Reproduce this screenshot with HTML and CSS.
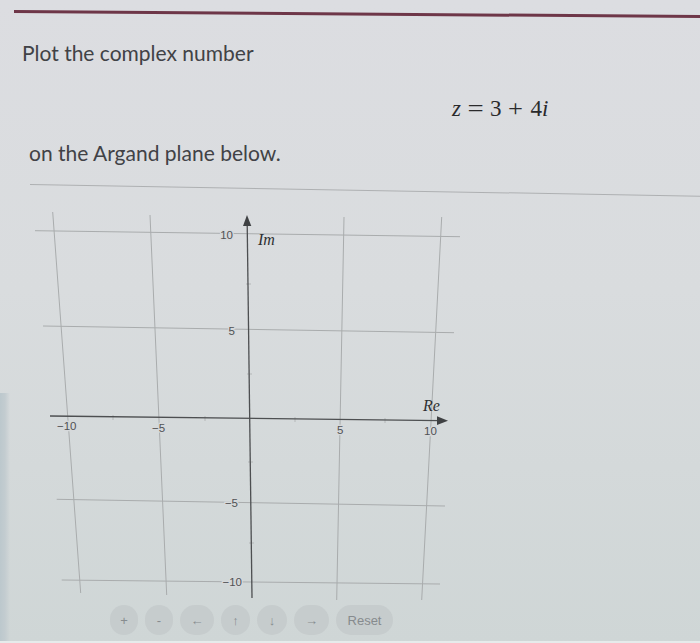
FILE: index.html
```html
<!DOCTYPE html>
<html lang="en">
<head>
<meta charset="utf-8">
<title>Argand plane</title>
<link rel="stylesheet" href="styles.css">
</head>
<body>
<div class="page">
  <div class="rule-top"></div>
  <p class="q">Plot the complex number</p>
  <div class="math"><span class="mi">z</span><span class="rel">=</span><span class="mn">3</span><span class="bin">+</span><span class="mn">4</span><span class="mi">i</span></div>
  <p class="q q2">on the Argand plane below.</p>
  <div class="sep"></div>
  <svg class="plane" width="440" height="400" viewBox="30 205 440 400" xmlns="http://www.w3.org/2000/svg">
    <g class="grid">
      <line x1="52.7" y1="212" x2="80.7" y2="593"/>
      <line x1="150" y1="215" x2="166.7" y2="595"/>
      <line x1="344" y1="217" x2="336.7" y2="600"/>
      <line x1="441.7" y1="217" x2="421.7" y2="600"/>
      <line x1="35" y1="230.7" x2="460" y2="236.7"/>
      <line x1="43" y1="326" x2="454" y2="332.7"/>
      <line x1="56.7" y1="499.3" x2="445" y2="506"/>
      <line x1="61.7" y1="580" x2="440" y2="584"/>
    </g>
    <g class="ticks">
      <line x1="113" y1="415" x2="113" y2="420"/>
      <line x1="205" y1="416" x2="205" y2="421"/>
      <line x1="295" y1="417" x2="295" y2="422"/>
      <line x1="385" y1="418" x2="385" y2="423"/>
      <line x1="246" y1="284" x2="251" y2="284"/>
      <line x1="247" y1="374" x2="252" y2="374"/>
      <line x1="248" y1="462" x2="253" y2="462"/>
      <line x1="249" y1="543" x2="254" y2="543"/>
    </g>
    <g class="axes">
      <line x1="50" y1="416" x2="440" y2="420.6"/>
      <line x1="247.2" y1="224" x2="252" y2="598"/>
    </g>
    <g class="arrows">
      <polygon points="247,215 243,226 251.3,226"/>
      <polygon points="448,420.7 437,416.2 437,425"/>
    </g>
    <g class="labels">
      <text x="233" y="239" text-anchor="end">10</text>
      <text x="235" y="335" text-anchor="end">5</text>
      <text x="238" y="507" text-anchor="end">−5</text>
      <text x="242" y="586" text-anchor="end">−10</text>
      <text x="57" y="430">−10</text>
      <text x="152" y="432">−5</text>
      <text x="337" y="434">5</text>
      <text x="424" y="435">10</text>
    </g>
    <g class="axis-names">
      <text x="258" y="245">Im</text>
      <text x="423" y="411">Re</text>
    </g>
  </svg>
  <div class="controls">
    <button class="btn w28">+</button>
    <button class="btn w28">-</button>
    <button class="btn w34">←</button>
    <button class="btn w29">↑</button>
    <button class="btn w30">↓</button>
    <button class="btn w35">→</button>
    <button class="btn reset">Reset</button>
  </div>
</div>
</body>
</html>
```

FILE: styles.css
```css
* { box-sizing: border-box; }
html, body { margin: 0; padding: 0; }
body {
  width: 700px;
  height: 643px;
  overflow: hidden;
  background:
    linear-gradient(to right, #bcc8cd 0, #c3ccd0 5px, rgba(205,212,213,0) 10px) left bottom / 12px 250px no-repeat,
    linear-gradient(to bottom, #dcdde1 0%, #d9dcde 45%, #cfd6d6 100%);
  font-family: Lato, "Open Sans", sans-serif;
  color: #414246;
}
.page {
  width: 700px;
  height: 643px;
  border-bottom: 2px solid #e6ebeb;
  overflow: hidden;
}
.rule-top {
  margin: 10px 0 0 14px;
  width: 690px;
  height: 3px;
  background: #6e3648;
  transform: rotate(0.42deg);
  transform-origin: left center;
}
.q {
  margin: 28px 0 0 22px;
  font-size: 21px;
  line-height: 24px;
  font-weight: 400;
  letter-spacing: 0;
}
.q2 {
  margin: 19px 0 0 29px;
}
.math {
  margin: 31px 0 0 452px;
  font-family: "Liberation Serif", "Times New Roman", serif;
  font-size: 23px;
  line-height: 26px;
  color: #2a2a2c;
  white-space: nowrap;
}
.math .mi { font-style: italic; }
.math .rel { margin: 0 8px; display: inline-block; transform: scaleX(1.25); }
.math .bin { margin: 0 8px; display: inline-block; transform: scaleX(1.15); }
.sep {
  margin: 19px 0 0 30px;
  width: 680px;
  height: 1px;
  background: #aeb0b2;
  transform: rotate(1.0deg);
  transform-origin: left center;
}
.plane {
  display: block;
  margin: 20px 0 0 30px;
}
.grid line { stroke: #a9acad; stroke-width: 1; }
.ticks line { stroke: #b4b7b8; stroke-width: 1; }
.axes line { stroke: #4d4f51; stroke-width: 1.3; }
.arrows polygon { fill: #3f4143; }
.labels text {
  font-family: "Liberation Sans", Arial, sans-serif;
  font-size: 11.5px;
  fill: #505254;
  stroke: #d6d9db;
  stroke-width: 2.5px;
  paint-order: stroke;
}
.axis-names text {
  font-family: "Liberation Serif", "Times New Roman", serif;
  font-style: italic;
  font-size: 16px;
  fill: #2e3032;
}
.controls {
  display: flex;
  gap: 7px;
  margin: 0 0 0 110px;
  height: 30px;
}
.btn {
  height: 30px;
  border: none;
  border-radius: 15px;
  background: #c6cccd;
  color: #878c8f;
  font-family: "Liberation Sans", Arial, sans-serif;
  font-size: 13px;
  padding: 0;
  display: flex;
  align-items: center;
  justify-content: center;
}
.w28 { width: 28px; }
.w29 { width: 29px; }
.w30 { width: 30px; }
.w34 { width: 34px; }
.w35 { width: 35px; }
.reset { width: 57px; font-size: 13px; color: #868b8e; }
```
